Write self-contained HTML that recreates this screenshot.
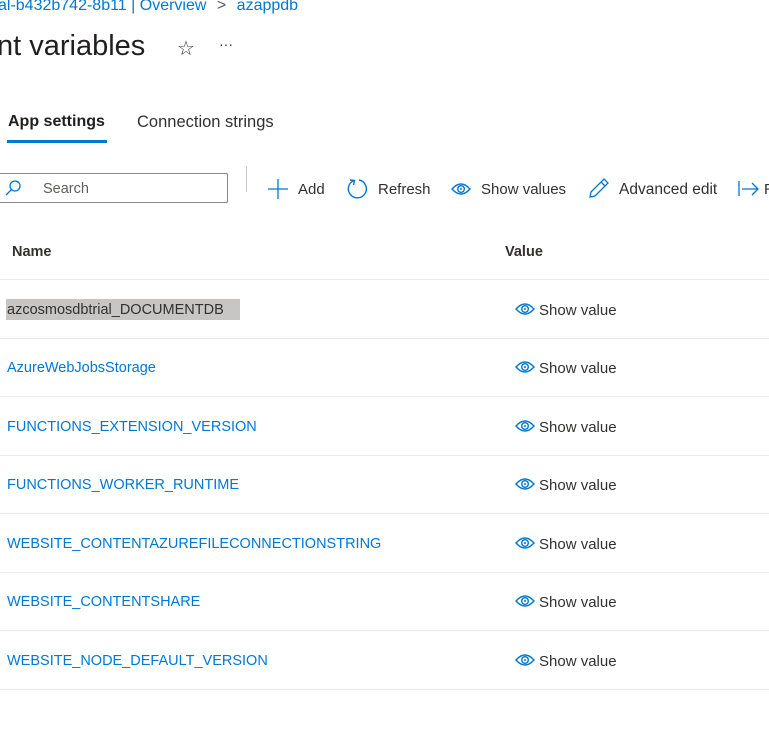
<!DOCTYPE html>
<html><head><meta charset="utf-8"><style>
body{margin:0;width:769px;height:743px;overflow:hidden;background:#fff;font-family:"Liberation Sans",sans-serif;color:#323130;position:relative}
.a{position:absolute;white-space:nowrap}
.blue{color:#0078d4}
.sep{position:absolute;left:0;width:769px;height:1px;background:#edebe9}
.sv{position:absolute;left:515px;font-size:15px;color:#323130}
.sv svg{vertical-align:-1px;margin-right:4px}
.nm{position:absolute;left:7px;font-size:14.5px;color:#0078d4}
</style></head><body>
<div class="a blue" style="left:-2px;top:-3px;font-size:16px">al-b432b742-8b11 | Overview <span style="color:#605e5c;margin:0 6px">&gt;</span> azappdb</div>
<div class="a" style="left:-3px;top:30px;font-size:29px;color:#201f1e">nt variables</div>
<div class="a" style="left:177px;top:36px;font-size:20px;color:#323130">☆</div>
<div class="a" style="left:219px;top:36px;font-size:14px">···</div>
<div class="a" style="left:8px;top:113px;font-size:16px;font-weight:bold;color:#201f1e">App settings</div>
<div class="a" style="left:7px;top:140px;width:100px;height:3px;background:#0078d4"></div>
<div class="a" style="left:137px;top:113px;font-size:16.5px">Connection strings</div>
<div class="a" style="left:-2px;top:173px;width:228px;height:28px;border:1px solid #8a8886;border-radius:2px"></div>
<svg class="a" style="left:4px;top:179px" width="20" height="18" viewBox="0 0 20 18"><circle cx="11" cy="7" r="5" fill="none" stroke="#0078d4" stroke-width="1.3"/><path d="M7.5 10.5 L2 16" stroke="#0078d4" stroke-width="1.3"/></svg>
<div class="a" style="left:43px;top:181px;font-size:14.5px;color:#605e5c">Search</div>
<div class="a" style="left:246px;top:166px;width:1px;height:26px;background:#c8c6c4"></div>
<svg class="a" style="left:268px;top:179px" width="20" height="20"><path d="M10 0V20M0 10H20" stroke="#0078d4" stroke-width="1.3"/></svg>
<div class="a" style="left:298px;top:181px;font-size:15px">Add</div>
<svg class="a" style="left:347px;top:178px" width="22" height="22" viewBox="0 0 22 22"><path d="M7 2.5 A9 9 0 1 0 12 2" fill="none" stroke="#0078d4" stroke-width="1.4"/><path d="M3 2 L7.5 2.5 L6.5 7" fill="none" stroke="#0078d4" stroke-width="1.4"/></svg>
<div class="a" style="left:378px;top:181px;font-size:15px">Refresh</div>
<svg class="a" style="left:451px;top:182px" width="20" height="14" viewBox="0 0 20 14"><path d="M1 7 Q10 -3 19 7 Q10 17 1 7Z" fill="none" stroke="#0078d4" stroke-width="1.4"/><circle cx="10" cy="7" r="3.3" fill="none" stroke="#0078d4" stroke-width="1.4"/><circle cx="10" cy="7" r="1" fill="#0078d4"/></svg>
<div class="a" style="left:481px;top:181px;font-size:15px">Show values</div>
<svg class="a" style="left:588px;top:177px" width="22" height="22" viewBox="0 0 22 22"><path d="M2 20 L3 15 L16 2 L20 6 L7 19 Z M13 5 L17 9" fill="none" stroke="#0078d4" stroke-width="1.3"/></svg>
<div class="a" style="left:619px;top:181px;font-size:15.5px">Advanced edit</div>
<svg class="a" style="left:738px;top:180px" width="22" height="18"><path d="M1 1V16M4 9H20M14 3L20 9L14 15" fill="none" stroke="#0078d4" stroke-width="1.3"/></svg>
<div class="a" style="left:764px;top:181px;font-size:15px">R</div>
<div class="a" style="left:12px;top:244px;font-size:14.5px;font-weight:bold">Name</div>
<div class="a" style="left:505px;top:244px;font-size:14.5px;font-weight:bold">Value</div>
<div class="sep" style="top:279px"></div><div class="sep" style="top:338px"></div><div class="sep" style="top:396px"></div><div class="sep" style="top:455px"></div><div class="sep" style="top:513px"></div><div class="sep" style="top:572px"></div><div class="sep" style="top:630px"></div><div class="sep" style="top:689px"></div>
<div class="a" style="left:6px;top:299px;width:234px;height:21px;background:#c8c6c4"></div>
<div class="nm" style="top:302px;color:#323130">azcosmosdbtrial_DOCUMENTDB</div>
<div class="nm" style="top:360px">AzureWebJobsStorage</div>
<div class="nm" style="top:419px">FUNCTIONS_EXTENSION_VERSION</div>
<div class="nm" style="top:477px">FUNCTIONS_WORKER_RUNTIME</div>
<div class="nm" style="top:536px">WEBSITE_CONTENTAZUREFILECONNECTIONSTRING</div>
<div class="nm" style="top:594px">WEBSITE_CONTENTSHARE</div>
<div class="nm" style="top:653px">WEBSITE_NODE_DEFAULT_VERSION</div>
<div class="sv" style="top:302px"><svg width="20" height="14" viewBox="0 0 20 14"><path d="M1 7 Q10 -3 19 7 Q10 17 1 7Z" fill="none" stroke="#0078d4" stroke-width="1.4"/><circle cx="10" cy="7" r="3.3" fill="none" stroke="#0078d4" stroke-width="1.4"/><circle cx="10" cy="7" r="1" fill="#0078d4"/></svg>Show value</div>
<div class="sv" style="top:360px"><svg width="20" height="14" viewBox="0 0 20 14"><path d="M1 7 Q10 -3 19 7 Q10 17 1 7Z" fill="none" stroke="#0078d4" stroke-width="1.4"/><circle cx="10" cy="7" r="3.3" fill="none" stroke="#0078d4" stroke-width="1.4"/><circle cx="10" cy="7" r="1" fill="#0078d4"/></svg>Show value</div>
<div class="sv" style="top:419px"><svg width="20" height="14" viewBox="0 0 20 14"><path d="M1 7 Q10 -3 19 7 Q10 17 1 7Z" fill="none" stroke="#0078d4" stroke-width="1.4"/><circle cx="10" cy="7" r="3.3" fill="none" stroke="#0078d4" stroke-width="1.4"/><circle cx="10" cy="7" r="1" fill="#0078d4"/></svg>Show value</div>
<div class="sv" style="top:477px"><svg width="20" height="14" viewBox="0 0 20 14"><path d="M1 7 Q10 -3 19 7 Q10 17 1 7Z" fill="none" stroke="#0078d4" stroke-width="1.4"/><circle cx="10" cy="7" r="3.3" fill="none" stroke="#0078d4" stroke-width="1.4"/><circle cx="10" cy="7" r="1" fill="#0078d4"/></svg>Show value</div>
<div class="sv" style="top:536px"><svg width="20" height="14" viewBox="0 0 20 14"><path d="M1 7 Q10 -3 19 7 Q10 17 1 7Z" fill="none" stroke="#0078d4" stroke-width="1.4"/><circle cx="10" cy="7" r="3.3" fill="none" stroke="#0078d4" stroke-width="1.4"/><circle cx="10" cy="7" r="1" fill="#0078d4"/></svg>Show value</div>
<div class="sv" style="top:594px"><svg width="20" height="14" viewBox="0 0 20 14"><path d="M1 7 Q10 -3 19 7 Q10 17 1 7Z" fill="none" stroke="#0078d4" stroke-width="1.4"/><circle cx="10" cy="7" r="3.3" fill="none" stroke="#0078d4" stroke-width="1.4"/><circle cx="10" cy="7" r="1" fill="#0078d4"/></svg>Show value</div>
<div class="sv" style="top:653px"><svg width="20" height="14" viewBox="0 0 20 14"><path d="M1 7 Q10 -3 19 7 Q10 17 1 7Z" fill="none" stroke="#0078d4" stroke-width="1.4"/><circle cx="10" cy="7" r="3.3" fill="none" stroke="#0078d4" stroke-width="1.4"/><circle cx="10" cy="7" r="1" fill="#0078d4"/></svg>Show value</div>
</body></html>
